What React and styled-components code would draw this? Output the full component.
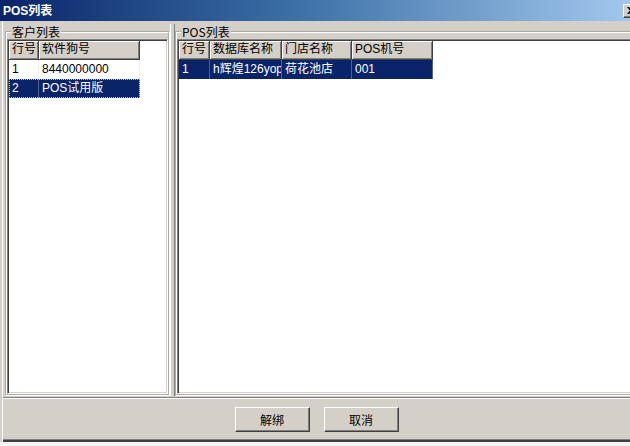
import React from 'react';
import styled, { createGlobalStyle } from 'styled-components';

const Global = createGlobalStyle`
  html, body { margin: 0; padding: 0; background: #fff; }
  body { font-family: "Liberation Sans", "Noto Sans CJK SC", sans-serif; font-size: 12px; color: #000; }
  * { box-sizing: border-box; }
`;

const Viewport = styled.div`
  width: 630px;
  height: 446px;
  overflow: hidden;
  background: #fff;
`;

const Window = styled.div`
  width: 640px;
  height: 446px;
  display: flex;
  flex-direction: column;
  background: #d4d0c8;
`;

const TitleBar = styled.div`
  flex: none;
  height: 21px;
  display: flex;
  align-items: center;
  justify-content: space-between;
  padding: 0 1px 0 3px;
  background: linear-gradient(to right, #0a246a 0%, #3a6ea5 45%, #a6caf0 100%);
`;

const Title = styled.span`
  color: #fff;
  font-weight: bold;
  font-size: 12px;
  line-height: 14px;
  font-family: "Liberation Sans", "Noto Sans CJK SC", sans-serif;
`;

const CloseButton = styled.div`
  width: 16px;
  height: 14px;
  background: #d4d0c8;
  border-top: 1px solid #fff;
  border-left: 1px solid #fff;
  border-right: 1px solid #404040;
  border-bottom: 1px solid #404040;
  box-shadow: inset -1px -1px #808080;
  display: flex;
  align-items: center;
  justify-content: center;
`;

const Main = styled.div`
  flex: 1;
  display: flex;
  flex-direction: column;
  margin-left: 2px;
  border-left: 1px solid #fff;
  min-height: 0;
`;

const Body = styled.div`
  flex: 1;
  min-height: 0;
  display: flex;
  padding: 3px 2px 1px 2px;
`;

const GroupBox = styled.fieldset`
  margin: 0;
  padding: 0;
  border: 2px groove #fff;
  display: flex;
  flex-direction: column;
  min-width: 0;
  ${(p) => (p.$width ? `width: ${p.$width}px; flex: none;` : 'flex: 1;')}
`;

const Legend = styled.legend`
  margin-left: 4px;
  padding: 0 1px;
  font-size: 12px;
  line-height: 15px;
  font-family: "Noto Sans CJK SC", "Liberation Sans", sans-serif;
`;

const Splitter = styled.div`
  flex: none;
  width: 5px;
  border-left: 1px solid #fff;
  border-right: 1px solid #808080;
  margin: 0 0 0 0;
`;

const ListBox = styled.div`
  flex: 1;
  min-height: 0;
  background: #fff;
  border-top: 1px solid #808080;
  border-left: 1px solid #808080;
  border-right: 1px solid #fff;
  border-bottom: 1px solid #fff;
  box-shadow: inset 1px 1px #404040, inset -1px -1px #d4d0c8;
  padding: 1px;
  overflow: hidden;
`;

const GridRow = styled.div`
  display: grid;
  grid-template-columns: ${(p) => p.$cols};
  justify-content: start;
  height: 19px;
  background: ${(p) => (p.$selected ? '#0a246a' : 'transparent')};
  color: ${(p) => (p.$selected ? '#fff' : '#000')};
  outline: ${(p) => (p.$focused ? '1px dotted #c8c4bc' : 'none')};
  outline-offset: -1px;
  width: max-content;
`;

const HeadCell = styled.div`
  height: 19px;
  background: #d4d0c8;
  border-right: 1px solid #404040;
  border-bottom: 1px solid #404040;
  box-shadow: inset 1px 1px #fff, inset -1px -1px #808080;
  padding-left: 3px;
  line-height: 17px;
  white-space: nowrap;
  overflow: hidden;
`;

const Cell = styled.div`
  height: 19px;
  padding-left: 3px;
  line-height: 19px;
  white-space: nowrap;
  overflow: hidden;
  border-right: 1px solid rgba(212, 208, 200, 0.35);
`;

const Footer = styled.div`
  flex: none;
  height: 45px;
  display: flex;
  justify-content: center;
  gap: 14px;
  padding: 9px 10px 0 0;
  border-top: 1px solid #808080;
  border-bottom: 2px solid #404040;
  box-shadow: inset 0 1px #fff, inset 0 -1px #808080;
`;

const Button = styled.div`
  width: 75px;
  height: 25px;
  background: #d4d0c8;
  border-top: 1px solid #fff;
  border-left: 1px solid #fff;
  border-right: 1px solid #404040;
  border-bottom: 1px solid #404040;
  box-shadow: inset -1px -1px #808080;
  display: flex;
  align-items: center;
  justify-content: center;
  font-family: "Noto Sans CJK SC", sans-serif;
  font-size: 12px;
`;

const BottomStrip = styled.div`
  flex: none;
  height: 4px;
  background: #f4f4f4;
`;

function DataGrid({ cols, head, rows, selected, focused }) {
  const template = cols.map((c) => `${c}px`).join(' ');
  return (
    <ListBox>
      <GridRow $cols={template}>
        {head.map((h) => (
          <HeadCell key={h}>{h}</HeadCell>
        ))}
      </GridRow>
      {rows.map((r, i) => (
        <GridRow
          key={i}
          $cols={template}
          $selected={i === selected}
          $focused={i === focused}
        >
          {r.map((c, j) => (
            <Cell key={j}>{c}</Cell>
          ))}
        </GridRow>
      ))}
    </ListBox>
  );
}

export default function App() {
  return (
    <>
      <Global />
      <Viewport>
        <Window>
          <TitleBar>
            <Title>POS列表</Title>
            <CloseButton>
              <svg width="8" height="7" viewBox="0 0 8 7">
                <path d="M0 0 L2 0 L4 2 L6 0 L8 0 L5 3.5 L8 7 L6 7 L4 5 L2 7 L0 7 L3 3.5 Z" fill="#000" />
              </svg>
            </CloseButton>
          </TitleBar>
          <Main>
            <Body>
              <GroupBox $width={165}>
                <Legend>客户列表</Legend>
                <DataGrid
                  cols={[30, 101]}
                  head={['行号', '软件狗号']}
                  rows={[
                    ['1', '8440000000'],
                    ['2', 'POS试用版'],
                  ]}
                  selected={1}
                  focused={1}
                />
              </GroupBox>
              <Splitter />
              <GroupBox>
                <Legend>POS列表</Legend>
                <DataGrid
                  cols={[31, 72, 70, 81]}
                  head={['行号', '数据库名称', '门店名称', 'POS机号']}
                  rows={[['1', 'h辉煌126yopos', '荷花池店', '001']]}
                  selected={0}
                  focused={-1}
                />
              </GroupBox>
            </Body>
            <Footer>
              <Button>解绑</Button>
              <Button>取消</Button>
            </Footer>
          </Main>
          <BottomStrip />
        </Window>
      </Viewport>
    </>
  );
}
